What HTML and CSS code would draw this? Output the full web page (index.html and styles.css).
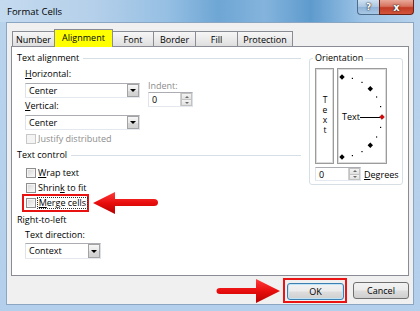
FILE: index.html
```html
<!DOCTYPE html>
<html>
<head>
<meta charset="utf-8">
<link rel="stylesheet" href="styles.css">
</head>
<body>
<div class="window">
  <div class="titlebar">
    <span class="title">Format Cells</span>
    <div class="caption">
      <span class="cap-help">?</span>
      <span class="cap-close">x</span>
    </div>
  </div>
  <div class="client">
    <div class="tabs">
      <div class="tab w-number">Number</div>
      <div class="tab sel w-align">Alignment</div>
      <div class="tab w-font">Font</div>
      <div class="tab w-border">Border</div>
      <div class="tab w-fill">Fill</div>
      <div class="tab w-prot">Protection</div>
    </div>
    <div class="panel">
      <div class="left">
        <div class="group-head"><span>Text alignment</span><i class="gline"></i></div>
        <div class="align-row">
          <div class="stack">
            <div class="label lbl-h"><u>H</u>orizontal:</div>
            <div class="combo w-wide"><span class="cval">Center</span><span class="dd"><i class="tri"></i></span></div>
            <div class="label lbl-v"><u>V</u>ertical:</div>
            <div class="combo w-wide combo-v"><span class="cval">Center</span><span class="dd"><i class="tri"></i></span></div>
          </div>
          <div class="indent">
            <div class="label dim">Indent:</div>
            <div class="spin w-indent"><span class="cval">0</span><span class="spinbtn"><i class="up"></i><i class="down"></i></span></div>
          </div>
        </div>
        <div class="check disabled row-justify"><span class="cb"></span><span class="ctext">Justify distributed</span></div>

        <div class="group-head head-tc"><span>Text control</span><i class="gline"></i></div>
        <div class="check row-wrap"><span class="cb"></span><span class="ctext"><u>W</u>rap text</span></div>
        <div class="check row-shrink"><span class="cb"></span><span class="ctext">Shrin<u>k</u> to fit</span></div>
        <div class="mark-merge">
          <div class="check"><span class="cb"></span><span class="ctext focus"><u>M</u>erge cells</span></div>
        </div>

        <div class="group-head head-rtl"><span>Right-to-left</span></div>
        <div class="label lbl-td">Text direction:</div>
        <div class="combo w-ctx"><span class="cval">Context</span><span class="dd"><i class="tri"></i></span></div>
      </div>

      <div class="orient">
        <div class="olabel">Orientation</div>
        <div class="orow">
          <div class="vbox"><span class="vtext">Text</span></div>
          <div class="dial">
            <svg width="48" height="94" viewBox="0 0 48 94">
              <g fill="#000">
                <polygon points="4,5.3 6.7,8 4,10.7 1.3,8"/>
                <rect x="13.8" y="8.8" width="1.2" height="1.2"/>
                <rect x="23.4" y="12.8" width="1.2" height="1.2"/>
                <polygon points="32.3,17 35,19.7 32.3,22.4 29.6,19.7"/>
                <rect x="38" y="27.4" width="1.2" height="1.2"/>
                <rect x="42" y="37" width="1.2" height="1.2"/>
                <rect x="42" y="57.8" width="1.2" height="1.2"/>
                <rect x="38" y="67.4" width="1.2" height="1.2"/>
                <polygon points="32.3,73.6 35,76.3 32.3,79 29.6,76.3"/>
                <rect x="23.4" y="82" width="1.2" height="1.2"/>
                <rect x="13.8" y="86" width="1.2" height="1.2"/>
                <polygon points="4,85.3 6.7,88 4,90.7 1.3,88"/>
              </g>
              <text x="4" y="51" class="dialtext">Text</text>
              <line x1="22" y1="48.5" x2="42" y2="48.5" stroke="#000" stroke-width="1"/>
              <polygon points="44,45.6 46.4,48 44,50.4 41.6,48" fill="#e00000" stroke="#700" stroke-width="0.5"/>
            </svg>
          </div>
        </div>
        <div class="degrow">
          <div class="spin w-deg"><span class="cval">0</span><span class="spinbtn"><i class="up"></i><i class="down"></i></span></div>
          <span class="deglbl"><u>D</u>egrees</span>
        </div>
      </div>
    </div>
    <div class="buttons">
      <span class="mark-ok"><button class="btn ok">OK</button></span>
      <button class="btn cancel">Cancel</button>
    </div>
  </div>
</div>

<svg class="annot" width="420" height="311" viewBox="0 0 420 311">
  <defs>
    <linearGradient id="rg" x1="0" y1="0" x2="0" y2="1">
      <stop offset="0" stop-color="#ff3b3b"/>
      <stop offset="0.5" stop-color="#e80d0d"/>
      <stop offset="1" stop-color="#b80000"/>
    </linearGradient>
  </defs>
  <path d="M93,203 L115,192 L115,199 L154,199 Q158,199 158,202.5 Q158,206 154,206 L115,206 L115,214 Z" fill="url(#rg)"/>
  <path d="M280,291 L256,279 L256,288 L220,288 Q216.5,288 216.5,291 Q216.5,294 220,294 L256,294 L256,303 Z" fill="url(#rg)"/>
</svg>
</body>
</html>
```

FILE: styles.css
```css
* { box-sizing: border-box; }

body {
  margin: 0;
  width: 420px;
  height: 311px;
  overflow: hidden;
  position: relative;
  background: #b4cfea;
  font-family: "Open Sans", "Liberation Sans", sans-serif;
  font-size: 9px;
  color: #000;
}

u { text-decoration: underline; text-underline-offset: 1px; }

.window {
  display: flex;
  flex-direction: column;
  height: 311px;
  background: linear-gradient(180deg, #b9d3ed 0%, #b3cfeb 100%);
}

.titlebar {
  height: 22px;
  display: flex;
  align-items: flex-start;
  background: linear-gradient(90deg, #c4daef 0%, #b5d0ea 22%, #95bfe3 40%, #6ea6d4 52%, #84b4dd 63%, #5e9bcd 74%, #9cc3e6 86%, #b9d3ec 100%);
}

.title {
  font-size: 9.5px;
  line-height: 12px;
  margin: 6px 0 0 7px;
  color: #000;
}

.caption {
  margin-left: auto;
  margin-right: 6px;
  display: flex;
}

.cap-help, .cap-close {
  height: 15px;
  display: flex;
  align-items: center;
  justify-content: center;
  color: #fff;
  font-family: "DejaVu Sans", sans-serif;
  font-weight: bold;
  text-shadow: 0 0 2px #333, 0 0 1px #000;
}

.cap-help {
  width: 22px;
  font-size: 9px;
  border: 1px solid #4e6c8c;
  border-top: none;
  border-right: none;
  border-radius: 0 0 0 4px;
  background: linear-gradient(180deg, #cfe1f2 0%, #a9c6e2 50%, #8fb2d6 51%, #a8c8e6 100%);
}

.cap-close {
  width: 35px;
  font-size: 10px;
  border: 1px solid #6b2217;
  border-top: none;
  border-radius: 0 0 4px 0;
  background: linear-gradient(180deg, #e9a999 0%, #d7735f 45%, #c23b25 55%, #d2553b 100%);
}

.client {
  flex: 1;
  margin: 0 6px 6px 6px;
  background: #f0f0f0;
  border: 1px solid #8ba6c3;
  padding: 6px 4px 0 4px;
  display: flex;
  flex-direction: column;
}

.tabs {
  display: flex;
  align-items: flex-end;
  height: 17px;
  padding-left: 1px;
}

.tab {
  height: 15px;
  border: 1px solid #898c95;
  border-bottom: none;
  margin-left: -1px;
  background: linear-gradient(180deg, #f6f6f6 0%, #ebebeb 50%, #dedede 100%);
  display: flex;
  align-items: center;
  justify-content: center;
  line-height: 12px;
  padding-top: 1px;
}

.tab:first-child { margin-left: 0; }

.tab.sel {
  height: 18px;
  margin-bottom: -1px;
  background: #ffff00;
  position: relative;
  z-index: 1;
  padding-top: 0;
  padding-bottom: 2px;
}

.w-number { width: 43px; }
.w-align { width: 59px; }
.w-font { width: 42px; }
.w-border { width: 43px; }
.w-fill { width: 43px; }
.w-prot { width: 56px; }

.panel {
  height: 230px;
  background: #fff;
  border: 1px solid #898c95;
  padding: 5px 4px 0 5px;
  display: flex;
  align-items: flex-start;
}

.left {
  width: 284px;
  display: flex;
  flex-direction: column;
}

.group-head {
  display: flex;
  align-items: center;
  height: 12px;
  line-height: 12px;
}

.gline {
  flex: 1;
  height: 1px;
  background: #d5dfe5;
  margin-left: 4px;
}

.label {
  height: 12px;
  line-height: 12px;
  white-space: nowrap;
}

.dim { color: #8d8d8d; }

.align-row {
  display: flex;
  margin-left: 8px;
}

.stack {
  display: flex;
  flex-direction: column;
}

.lbl-h { margin-top: 4px; }
.stack .combo { margin-top: 3px; }
.lbl-v { margin-top: 2px; }

.indent {
  margin-left: 8px;
  margin-top: 16px;
  display: flex;
  flex-direction: column;
}

.combo {
  height: 15px;
  border: 1px solid #abadb3;
  border-color: #abadb3 #dbdfe6 #e3e9ef #e2e3ea;
  background: #fff;
  display: flex;
  align-items: stretch;
}

.w-wide { width: 115px; }

.w-ctx { width: 76px; height: 16px; margin-left: 8px; margin-top: 2px; }

.cval {
  padding-left: 3px;
  line-height: 13px;
  flex: 1;
}

.dd {
  width: 12px;
  border: 1px solid #a3a3a3;
  background: linear-gradient(180deg, #f6f6f6 0%, #e8e8e8 50%, #d9d9d9 51%, #d0d0d0 100%);
  display: flex;
  align-items: center;
  justify-content: center;
}

.tri {
  width: 0;
  height: 0;
  border-left: 3px solid transparent;
  border-right: 3px solid transparent;
  border-top: 3px solid #000;
}

.spin {
  height: 15px;
  border: 1px solid #abadb3;
  border-color: #abadb3 #dbdfe6 #e3e9ef #e2e3ea;
  background: #fff;
  display: flex;
  align-items: stretch;
}

.w-indent { width: 45px; }
.w-deg { width: 46px; height: 14px; }

.spinbtn {
  width: 12px;
  display: flex;
  flex-direction: column;
  border-left: 1px solid #d0d0d0;
}

.spinbtn i {
  flex: 1;
  display: flex;
  align-items: center;
  justify-content: center;
  background: linear-gradient(180deg, #f4f4f4, #e1e1e1);
  border: 1px solid #c2c2c2;
}

.spinbtn i.down { border-top: none; }

.spinbtn i::after {
  content: "";
  width: 0;
  height: 0;
  border-left: 2.5px solid transparent;
  border-right: 2.5px solid transparent;
}

.spinbtn i.up::after { border-bottom: 2.5px solid #6a6a6a; }
.spinbtn i.down::after { border-top: 2.5px solid #6a6a6a; }

.check {
  display: flex;
  align-items: center;
  height: 12px;
  line-height: 12px;
  margin-left: 9px;
  white-space: nowrap;
}

.cb {
  width: 10px;
  height: 10px;
  border: 1px solid #8e8f8f;
  background: linear-gradient(135deg, #d4d4d4 0%, #ececec 60%, #fbfbfb 100%);
  box-shadow: inset 0 0 0 1px #f4f4f4;
}

.ctext { margin-left: 2px; }

.check.disabled .cb {
  border-color: #c8c8c8;
  background: #f4f4f4;
}

.check.disabled .ctext { color: #8d8d8d; }

.row-justify { margin-top: 3px; }
.head-tc { margin-top: 4px; }
.row-wrap { margin-top: 6px; }
.row-shrink { margin-top: 3px; }

.mark-merge {
  margin-left: 5px;
  width: 67px;
  border: 2px solid #e81212;
  padding: 1px 0 1px 2px;
}

.mark-merge .check { margin-left: 0; }

.focus {
  outline: 1px dotted #333;
  outline-offset: 0;
  padding: 0 1px;
  line-height: 10px;
}

.head-rtl { margin-top: 2px; }
.lbl-td { margin-top: 3px; margin-left: 8px; }

.orient {
  width: 94px;
  height: 127px;
  margin-left: 8px;
  margin-top: 6px;
  border: 1px solid #d5dfe5;
  border-radius: 3px;
  padding: 0 0 0 5px;
}

.olabel {
  display: table;
  margin: -7px 0 0 -2px;
  padding: 0 2px;
  background: #fff;
  line-height: 12px;
  height: 12px;
}

.orow {
  display: flex;
  margin-top: 4px;
}

.vbox, .dial {
  height: 96px;
  border: 1px solid #9c9c9c;
  box-shadow: inset 0 0 0 1px #dcdcdc;
}

.vbox {
  width: 19px;
  display: flex;
  align-items: center;
  justify-content: center;
  padding-bottom: 5px;
}

.vtext {
  writing-mode: vertical-lr;
  text-orientation: upright;
  font-size: 8.5px;
  line-height: 10px;
  letter-spacing: -1px;
}

.dial {
  width: 50px;
  margin-left: 3px;
}

.dial svg { display: block; }

.dialtext {
  font-family: "Open Sans", "Liberation Sans", sans-serif;
  font-size: 9px;
}

.degrow {
  display: flex;
  align-items: center;
  margin-top: 3px;
}

.deglbl { margin-left: 3px; }

.buttons {
  display: flex;
  justify-content: flex-end;
  align-items: center;
  gap: 6px;
  margin-top: 2px;
}

.mark-ok {
  display: flex;
  border: 2px solid #ea1414;
  padding: 3px 1px 1px 2px;
}

.btn {
  height: 17px;
  border: 1px solid #707070;
  border-radius: 3px;
  background: linear-gradient(180deg, #f2f2f2 0%, #ebebeb 48%, #dddddd 52%, #cfcfcf 100%);
  font-family: "Open Sans", "Liberation Sans", sans-serif;
  font-size: 9px;
  color: #000;
  padding: 0;
  line-height: 14px;
}

.ok {
  width: 57px;
  border-color: #3c7fb1;
  box-shadow: inset 0 0 0 1px #bfe3f7;
}

.cancel { width: 56px; }

.annot {
  position: absolute;
  left: 0;
  top: 0;
  pointer-events: none;
}
```
